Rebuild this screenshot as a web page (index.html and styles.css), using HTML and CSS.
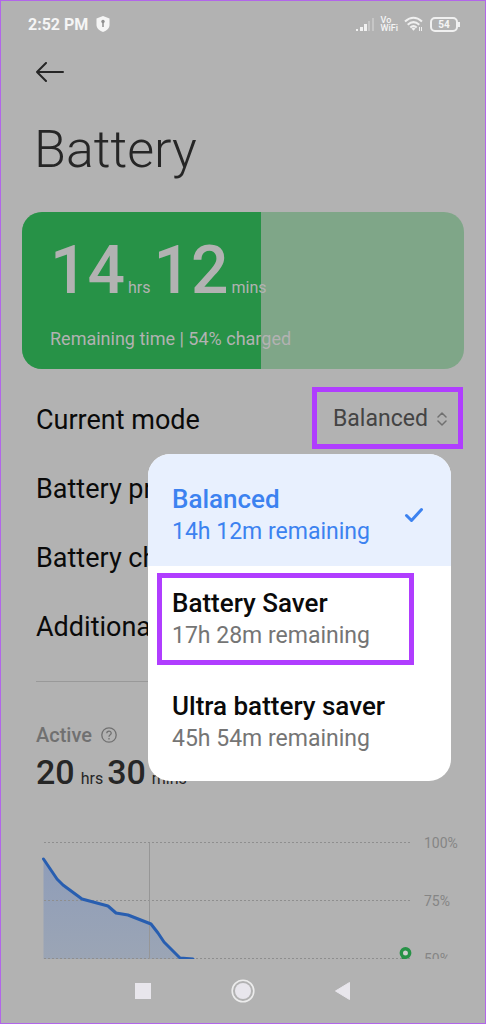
FILE: index.html
```html
<!DOCTYPE html>
<html lang="en">
<head>
<meta charset="utf-8">
<meta name="viewport" content="width=device-width, initial-scale=1">
<title>Battery</title>
<link rel="stylesheet" href="styles.css">
</head>
<body>
<div class="screen">
  <header class="status">
    <span class="clock">2:52 PM</span>
    <svg class="shield" width="14" height="16" viewBox="0 0 14 16"><path d="M7 0 13.500 2.500V9C13.500 12.500 10 15 7 16 4 15 .5 12.500.5 9V2.500Z" fill="#f5f5f5"/><circle cx="7" cy="5.500" r="1.700" fill="#8f8f8f"/><path d="M7 6v5" stroke="#8f8f8f" stroke-width="1.500"/></svg>
    <div class="indicators">
      <svg width="19" height="15" viewBox="0 0 19 15"><path d="M0 12h2v2H0zM4 10h3v4H4zM8 7h3v7H8z" fill="#f0f0f0"/><path d="M12 4h2v10h-2zM16 1h2v13h-2z" fill="#c6c6c6"/></svg>
      <span class="vowifi"><span>Vo</span><span>WiFi</span></span>
      <svg width="20" height="16" viewBox="0 0 20 16" fill="none" stroke="#f0f0f0" stroke-width="2"><path d="M1 5.500Q9.500-2 18 5.500M3.700 8.700Q9.500 3.500 15.300 8.700M6.300 11.500Q9.500 8.700 12.700 11.500"/><path d="M7.500 12.500Q9.500 11 11.500 12.500L9.500 14.700Z" fill="#f0f0f0" stroke="none"/><path d="M15.500 11v4M17.500 11v4" stroke-width="1"/></svg>
      <span class="level"><span class="level-body">54</span><span class="level-tip"></span></span>
    </div>
  </header>

  <main class="content">
    <button class="back" type="button" aria-label="Back">
      <svg width="28" height="20" viewBox="0 0 28 20" fill="none" stroke="#262626" stroke-width="2" stroke-linecap="round" stroke-linejoin="round"><path d="M27 10H1M10 1 1 10l9 9"/></svg>
    </button>
    <h1 class="title">Battery</h1>

    <section class="charge">
      <div class="charge-fill" style="width:54%"></div>
      <div class="charge-time">
        <span class="big">14</span><span class="unit">hrs</span><span class="big">12</span><span class="unit">mins</span>
      </div>
      <p class="charge-note">Remaining time | 54% charged</p>
    </section>

    <div class="rows">
      <div class="row mode">
        <label for="mode">Current mode</label>
        <div class="picker">
          <select id="mode"><option selected>Balanced</option><option>Battery Saver</option><option>Ultra battery saver</option></select>
          <svg width="12" height="14" viewBox="0 0 12 14" fill="none" stroke="#707070" stroke-width="1.500" stroke-linecap="round" stroke-linejoin="round"><path d="M2 5 6 1l4 4M2 9l4 4 4-4"/></svg>
        </div>
        <div class="menu">
          <button class="option selected" type="button">
            <span class="option-text"><span class="option-name">Balanced</span><span class="option-note">14h 12m remaining</span></span>
            <svg width="20" height="16" viewBox="0 0 20 16" fill="none" stroke="#3c82f0" stroke-width="3" stroke-linecap="round"><path d="m2.500 8.500 5 5L17.500 2.500" stroke-linejoin="round"/></svg>
          </button>
          <button class="option marked" type="button"><span class="option-text"><span class="option-name">Battery Saver</span><span class="option-note">17h 28m remaining</span></span></button>
          <button class="option" type="button"><span class="option-text"><span class="option-name">Ultra battery saver</span><span class="option-note">45h 54m remaining</span></span></button>
        </div>
      </div>
      <div class="row">Battery pr</div>
      <div class="row">Battery ch</div>
      <div class="row">Additional</div>
    </div>

    <section class="active">
      <h2 class="active-title">Active
        <svg width="16" height="16" viewBox="0 0 16 16" fill="none" stroke="#707070"><circle cx="8" cy="8" r="7.200" stroke-width="1.300"/><path d="M5.800 6.300C5.800 3.400 10.200 3.400 10.200 6.200 10.200 7.700 8 7.700 8 9.700M8 11v1.500" stroke-width="1.300"/></svg>
      </h2>
      <p class="active-time"><span class="mid">20</span><span class="small">hrs</span><span class="mid">30</span><span class="small">mins</span></p>
    </section>

    <section class="chart">
      <svg class="plot" viewBox="0 0 372 126" preserveAspectRatio="none" fill="none">
        <defs><linearGradient id="area" x1="0" y1="0" x2="0" y2="1"><stop offset="0" stop-color="#8f9db9"/><stop offset="1" stop-color="#9ba5b5"/></linearGradient></defs>
        <path d="M1.500 26 15 46l6 6 19 14 26 7 8 7 12 2 23 9 7 9 6 9 16 17H1.500Z" fill="url(#area)"/>
        <path d="M2 9.500h367M2 67.500h367M2 125.500h367" stroke="#8e8e8e" stroke-dasharray="2 2"/>
        <path d="M107.500 10v116" stroke="#969696"/>
        <path d="M1.500 26 15 46l6 6 19 14 26 7 8 7 12 2 23 9 7 9 6 9 16 16 13 1" stroke="#285eb0" stroke-width="3" stroke-linejoin="round" stroke-linecap="round"/>
        <path d="M359 122l1 4h4l3-3z" fill="#279247"/><circle cx="363.500" cy="120" r="4.200" stroke="#279247" stroke-width="3.400" fill="#d0d0d0"/>
      </svg>
      <div class="scale"><span>100%</span><span>75%</span><span>50%</span></div>
    </section>
  </main>

  <nav class="nav">
    <button type="button" aria-label="Recents"><svg width="16" height="16" viewBox="0 0 16 16"><path d="M0 0h16v16H0z" fill="#e8e6ec"/></svg></button>
    <button type="button" aria-label="Home"><svg width="24" height="24" viewBox="0 0 24 24"><circle cx="12" cy="12" r="10.800" fill="none" stroke="#ececec" stroke-width="1.600"/><circle cx="12" cy="12" r="8" fill="#e8e6ec"/></svg></button>
    <button type="button" aria-label="Back"><svg width="16" height="18" viewBox="0 0 16 18"><path d="M14.500.5v17L.5 9Z" fill="#e8e6ec" stroke="#e8e6ec" stroke-linejoin="round"/></svg></button>
  </nav>
</div>
</body>
</html>
```
FILE: styles.css
```css
* { box-sizing: border-box; }
body {
  margin: 0;
  background: #b2b2b2;
  color: #0a0a0a;
  font-family: Roboto, "Noto Sans", sans-serif;
}
button, select { font: inherit; color: inherit; background: none; border: 0; margin: 0; padding: 0; }
h1, h2, p { margin: 0; }
svg { display: block; flex: none; }

.screen {
  min-height: 100vh;
  display: flex;
  flex-direction: column;
  border: 1px solid #b266ea;
}

.status {
  display: flex;
  align-items: center;
  gap: 8px;
  height: 46px;
  padding: 0 25px 0 27px;
  color: #f5f5f5;
}
.clock { font-size: 16px; font-weight: 700; }
.indicators { display: flex; align-items: center; gap: 6px; margin-left: auto; }
.vowifi { display: flex; flex-direction: column; font-size: 9px; line-height: 8px; font-weight: 500; }
.level { display: flex; align-items: center; }
.level-body {
  width: 28px;
  border: 2px solid #f0f0f0;
  border-radius: 5px;
  font-size: 10px;
  line-height: 11px;
  font-weight: 700;
  text-align: center;
}
.level-tip { width: 2px; height: 5px; background: #f0f0f0; }

.content { padding: 0 21px; }
.back { display: flex; align-items: center; height: 50px; padding: 0 14px; }
.title {
  padding: 21px 12px 30px;
  font-size: 52px;
  line-height: 64px;
  font-weight: 300;
  color: #262626;
}

.charge {
  position: relative;
  overflow: hidden;
  height: 157px;
  padding: 23px 28px;
  border-radius: 20px;
  background: #7fa688;
  color: #b2b2b2;
}
.charge-fill { position: absolute; inset: 0 auto 0 0; background: #279247; }
.charge-time, .charge-note { position: relative; }
.charge-time { display: flex; align-items: baseline; gap: 3px; line-height: 72px; }
.big { font-size: 66px; font-weight: 500; }
.unit { font-size: 16px; }
.charge-note { margin-top: 3px; font-size: 18px; line-height: 24px; }

.rows { margin-top: 16px; }
.row {
  display: flex;
  align-items: center;
  height: 69px;
  padding-left: 14px;
  font-size: 27px;
}
.mode { position: relative; justify-content: space-between; }
.picker {
  display: flex;
  align-items: center;
  width: 151px;
  height: 62px;
  margin: 0 1px 4px 0;
  padding: 2px 10px 0 16px;
  border: 5px solid #b03dff;
  color: #444;
}
.picker select { appearance: none; flex: 1; min-width: 0; font-size: 23px; }
.menu {
  position: absolute;
  z-index: 1;
  top: 100%;
  right: 13px;
  width: 303px;
  overflow: hidden;
  padding-bottom: 9px;
  border-radius: 22px;
  background: #fff;
}
.option {
  position: relative;
  display: flex;
  align-items: center;
  justify-content: space-between;
  width: 100%;
  height: 103px;
  padding: 2px 27px 0 24px;
  text-align: left;
  color: #0a0a0a;
}
.option-text { display: flex; flex-direction: column; }
.option-name { font-size: 26px; line-height: 34px; font-weight: 500; }
.option-note { font-size: 23px; line-height: 32px; color: #757575; }
.selected { height: 112px; padding-top: 10px; background: #e8f0fe; }
.selected, .selected .option-note { color: #3c82f0; }
.marked::after {
  content: "";
  position: absolute;
  inset: 7px 37px 4px 9px;
  border: 5px solid #b03dff;
}

.active {
  margin: 20px 14px 0;
  padding-top: 42px;
  border-top: 1px solid #999;
}
.active-title {
  display: flex;
  align-items: center;
  gap: 9px;
  font-size: 20px;
  line-height: 22px;
  font-weight: 500;
  color: #707070;
}
.active-time { display: flex; align-items: baseline; margin-top: 9px; line-height: 34px; color: #262626; }
.mid { font-size: 34px; font-weight: 500; }
.small { margin: 0 4px 0 6px; font-size: 16px; }

.chart { display: flex; gap: 10px; height: 126px; margin-top: 37px; padding-left: 20px; overflow: hidden; }
.plot { flex: 1; min-width: 0; height: 126px; }
.scale { display: flex; flex-direction: column; gap: 38px; width: 40px; font-size: 14px; line-height: 20px; color: #858585; }

.nav { display: flex; justify-content: center; align-items: center; gap: 80px; flex: 1; min-height: 64px; }
.nav button { display: flex; }
```
